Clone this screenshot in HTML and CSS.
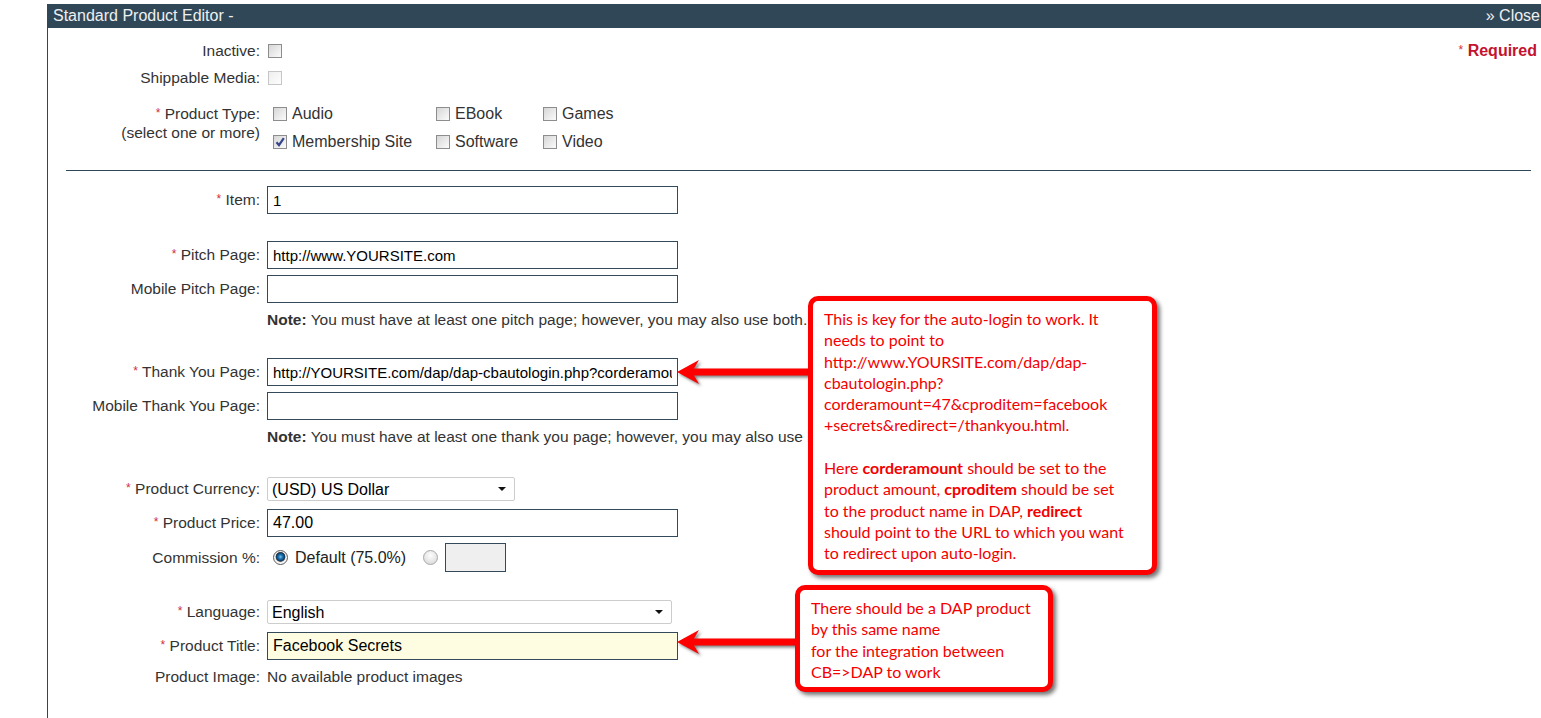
FILE: index.html
```html
<!DOCTYPE html>
<html lang="en">
<head>
    <meta charset="UTF-8">
    <meta name="viewport" content="width=device-width, initial-scale=1.0">
    <title>Standard Product Editor</title>
    <link rel="stylesheet" href="styles.css">
</head>
<body>

    <div class="panel">
        <div class="panel-head">
            <span>Standard Product Editor -</span>
            <a class="close" href="#">&raquo; Close</a>
        </div>

        <form class="editor">
            <div class="top">
                <div class="top-fields">
                    <div class="row row-check">
                        <label>Inactive:</label>
                        <span class="field"><span class="cb"></span></span>
                    </div>
                    <div class="row row-check">
                        <label>Shippable Media:</label>
                        <span class="field"><span class="cb cb-off"></span></span>
                    </div>
                    <div class="row row-types">
                        <label class="multi"><span class="req">*</span> Product Type:<br>(select one or more)</label>
                        <div class="types">
                            <span class="type"><span class="cb"></span>Audio</span>
                            <span class="type"><span class="cb"></span>EBook</span>
                            <span class="type"><span class="cb"></span>Games</span>
                            <span class="type"><span class="cb cb-on"><svg viewBox="0 0 12 12" width="12" height="12"><path d="M2.5 6.2 L5 9.2 L9.8 2.2" fill="none" stroke="#35458a" stroke-width="2.2"/></svg></span>Membership Site</span>
                            <span class="type"><span class="cb"></span>Software</span>
                            <span class="type"><span class="cb"></span>Video</span>
                        </div>
                    </div>
                </div>
                <div class="required"><span class="req">*</span> Required</div>
            </div>

            <hr class="divider">

            <div class="group group-first">
                <div class="row">
                    <label><span class="req">*</span> Item:</label>
                    <input class="text" type="text" value="1">
                </div>
            </div>

            <div class="group">
                <div class="row">
                    <label><span class="req">*</span> Pitch Page:</label>
                    <input class="text" type="text" value="http://www.YOURSITE.com">
                </div>
                <div class="row">
                    <label>Mobile Pitch Page:</label>
                    <input class="text" type="text" value="">
                </div>
                <div class="row row-note">
                    <label></label>
                    <p class="note"><b>Note:</b> You must have at least one pitch page; however, you may also use both.</p>
                </div>
            </div>

            <div class="group">
                <div class="row">
                    <label><span class="req">*</span> Thank You Page:</label>
                    <input class="text" type="text" value="http://YOURSITE.com/dap/dap-cbautologin.php?corderamount=47&amp;cproditem=facebook+secrets&amp;redirect=/thankyou.html">
                </div>
                <div class="row">
                    <label>Mobile Thank You Page:</label>
                    <input class="text" type="text" value="">
                </div>
                <div class="row row-note">
                    <label></label>
                    <p class="note"><b>Note:</b> You must have at least one thank you page; however, you may also use both.</p>
                </div>
            </div>

            <div class="group">
                <div class="row">
                    <label><span class="req">*</span> Product Currency:</label>
                    <span class="select select-short"><select><option>(USD) US Dollar</option></select></span>
                </div>
                <div class="row">
                    <label><span class="req">*</span> Product Price:</label>
                    <input class="text text-big" type="text" value="47.00">
                </div>
                <div class="row">
                    <label>Commission %:</label>
                    <span class="field commission">
                        <span class="radio radio-on"></span>
                        <span class="radio-text">Default (75.0%)</span>
                        <span class="radio"></span>
                        <input class="percent" type="text" value="">
                    </span>
                </div>
            </div>

            <div class="group">
                <div class="row">
                    <label><span class="req">*</span> Language:</label>
                    <span class="select select-long"><select><option>English</option></select></span>
                </div>
                <div class="row">
                    <label><span class="req">*</span> Product Title:</label>
                    <input class="text text-big text-title" type="text" value="Facebook Secrets">
                </div>
                <div class="row row-note">
                    <label>Product Image:</label>
                    <span class="field">No available product images</span>
                </div>
            </div>
        </form>
    </div>

    <!-- annotation overlays -->
    <svg class="arrow arrow-key" width="150" height="44" viewBox="0 0 150 44">
        <polygon points="7,22 29,10 24,18.5 150,18.5 150,25.5 24,25.5 29,34" fill="#ff0000"/>
    </svg>
    <div class="callout callout-key">
        This is key for the auto-login to work. It<br>
        needs to point to<br>
        http://www.YOURSITE.com/dap/dap-<br>
        cbautologin.php?<br>
        corderamount=47&amp;cproditem=facebook<br>
        +secrets&amp;redirect=/thankyou.html.<br>
        <br>
        Here <b>corderamount</b> should be set to the<br>
        product amount, <b>cproditem</b> should be set<br>
        to the product name in DAP, <b>redirect</b><br>
        should point to the URL to which you want<br>
        to redirect upon auto-login.
    </div>

    <svg class="arrow arrow-title" width="134" height="44" viewBox="0 0 134 44">
        <polygon points="7,22 29,10 24,18.5 134,18.5 134,25.5 24,25.5 29,34" fill="#ff0000"/>
    </svg>
    <div class="callout callout-title">
        There should be a DAP product<br>
        by this same name<br>
        for the integration between<br>
        CB=&gt;DAP to work
    </div>

</body>
</html>
```

FILE: styles.css
```css
/* Basic Styles */
body {
    margin: 0;
    padding-top: 4px;
    background-color: #fff;
    font-family: "Liberation Sans", Arial, sans-serif;
    font-size: 15.5px;
    color: #333;
    overflow: hidden;
}

.panel {
    margin-left: 47px;
    border-left: 1px solid #304757;
    min-height: 714px;
}

.panel-head {
    display: flex;
    justify-content: space-between;
    align-items: center;
    height: 24px;
    padding-left: 5px;
    background-color: #304757;
    color: #eef0f1;
    font-size: 16px;
    overflow: hidden;
}

.close {
    color: #eef0f1;
    text-decoration: none;
    margin-right: 1px;
}

.editor {
    padding-top: 9px;
}

.top {
    display: flex;
    justify-content: space-between;
}

.required {
    line-height: 27px;
    padding-right: 4px;
    font-size: 16px;
    font-weight: bold;
    color: #c4122f;
}

.req {
    color: #d12d3c;
    font-size: 12px;
    font-weight: normal;
    vertical-align: 2px;
}

/* form rows */
.row {
    display: grid;
    grid-template-columns: 212px auto;
    column-gap: 7px;
    align-items: center;
    height: 28px;
}

.row label {
    text-align: right;
    white-space: nowrap;
}

.row-check {
    height: 27px;
}

.row-types {
    align-items: start;
    height: 55px;
    margin-top: 9px;
}

.row-types .multi {
    line-height: 19px;
    padding-top: 4px;
}

.row-note {
    height: 22px;
}

.field {
    display: flex;
    align-items: center;
}

.types {
    display: grid;
    grid-template-columns: 163px 107px auto;
    grid-template-rows: 28px 27px;
    margin-left: 6px;
    width: 340px;
}

.type {
    display: flex;
    align-items: center;
    gap: 5px;
    font-size: 16px;
}

.cb {
    display: inline-flex;
    align-items: center;
    justify-content: center;
    box-sizing: border-box;
    width: 14px;
    height: 14px;
    margin-left: 1px;
    border: 1px solid #8d8d8d;
    background: linear-gradient(135deg, #d6d6d6, #fbfbfb);
}

.type .cb {
    margin-left: 0;
}

.cb-off {
    border-color: #c6c6c6;
    background: linear-gradient(135deg, #eeeeee, #fdfdfd);
}

.divider {
    height: 0;
    margin: 15px 10px 0 18px;
    border: none;
    border-top: 1px solid #304757;
}

.group {
    display: flex;
    flex-direction: column;
    gap: 6px;
    margin-top: 27px;
}

.group-first {
    margin-top: 15px;
}

.text {
    box-sizing: border-box;
    width: 411px;
    height: 28px;
    padding: 0 5px;
    border: 1px solid #34495a;
    border-radius: 0;
    font-family: "Liberation Sans", Arial, sans-serif;
    font-size: 15px;
    color: #000;
    background-color: #fff;
}

.text-big {
    font-size: 16px;
}

.text-title {
    background-color: #fffde1;
}

.note {
    margin: 0;
    white-space: nowrap;
}

.select {
    position: relative;
    display: inline-block;
    height: 24px;
}

.select select {
    appearance: none;
    -webkit-appearance: none;
    box-sizing: border-box;
    width: 100%;
    height: 24px;
    padding: 0 4px;
    border: 1px solid #cdcdcd;
    border-radius: 2px;
    background-color: #fff;
    font-family: "Liberation Sans", Arial, sans-serif;
    font-size: 16px;
    color: #000;
}

.select::after {
    content: "";
    position: absolute;
    right: 9px;
    top: 10px;
    border-left: 4px solid transparent;
    border-right: 4px solid transparent;
    border-top: 4px solid #111;
    pointer-events: none;
}

.select-short {
    width: 248px;
}

.select-long {
    width: 405px;
}

.commission {
    font-size: 16px;
    color: #222;
}

.radio {
    box-sizing: border-box;
    width: 15px;
    height: 15px;
    margin-left: 6px;
    border-radius: 50%;
    border: 1px solid #a8a8a8;
    background: radial-gradient(circle at 50% 35%, #fdfdfd, #d4d4d4);
}

.radio-on {
    border-color: #5a5a5a;
    background: radial-gradient(circle at 50% 45%, #7fc3ee 0, #1d74b4 2px, #0b3f6b 4px, #4a4a4a 4.6px, #e9e9e9 5.2px, #fff 7px);
}

.radio-text {
    margin-left: 7px;
}

.radio-text + .radio {
    margin-left: 17px;
}

.percent {
    box-sizing: border-box;
    width: 61px;
    height: 29px;
    margin-left: 7px;
    border: 1px solid #34495a;
    background-color: #efefef;
}

/* annotations */
.callout {
    position: absolute;
    box-sizing: border-box;
    padding: 7px 6px 0 11px;
    border: 5px solid #ff0000;
    border-radius: 10px;
    background-color: #fff;
    box-shadow: 3px 3px 4px rgba(0, 0, 0, 0.55);
    font-family: Lato, "Open Sans", sans-serif;
    font-size: 16px;
    line-height: 21.3px;
    color: #f40000;
    white-space: nowrap;
}

.callout-key {
    left: 808px;
    top: 296px;
    width: 349px;
    height: 279px;
}

.callout-title {
    left: 795px;
    top: 585px;
    width: 258px;
    height: 107px;
}

.arrow {
    position: absolute;
    filter: drop-shadow(2px 2px 1.5px rgba(0, 0, 0, 0.5));
}

.arrow-key {
    left: 670px;
    top: 350px;
}

.arrow-title {
    left: 670px;
    top: 620px;
}
```
